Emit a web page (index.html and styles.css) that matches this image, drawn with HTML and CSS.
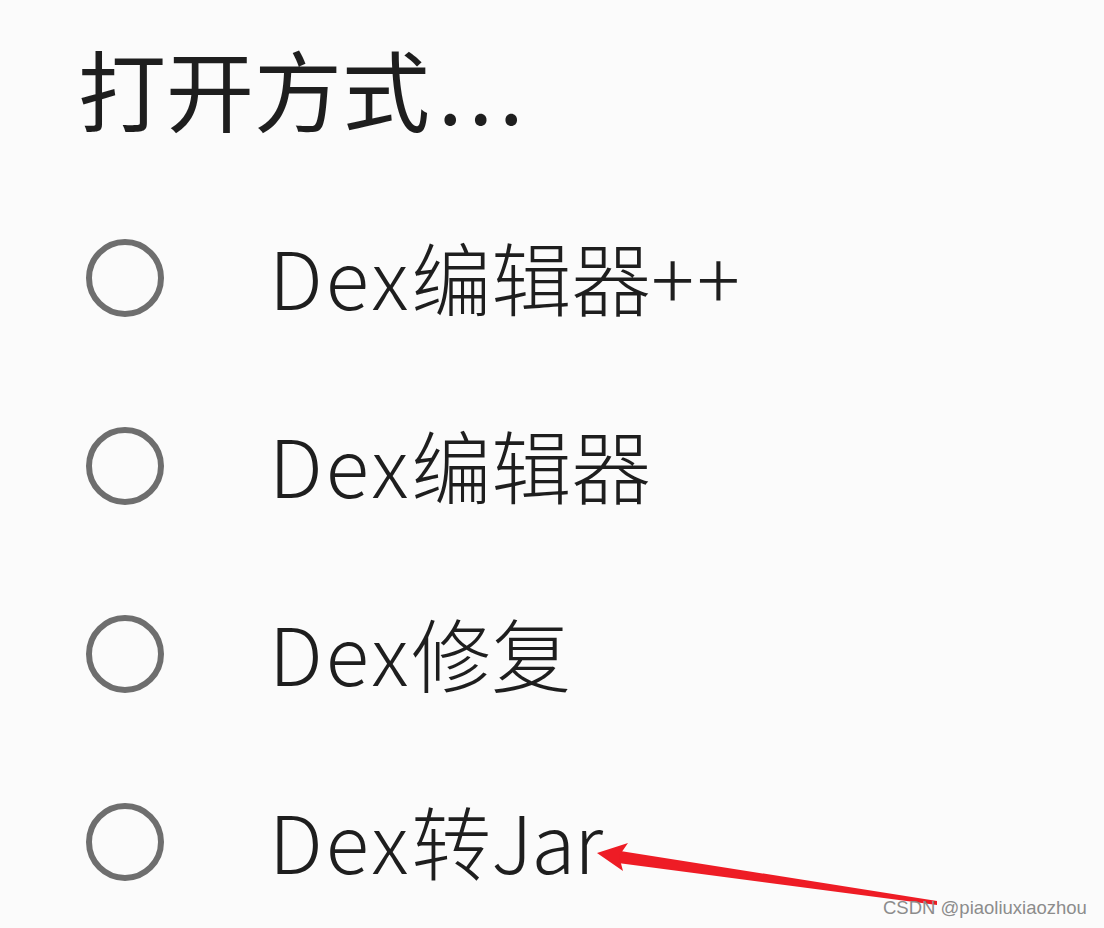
FILE: index.html
```html
<!DOCTYPE html>
<html lang="zh-CN">
<head>
<meta charset="utf-8">
<title>打开方式</title>
<link rel="stylesheet" href="styles.css">
</head>
<body>
<div class="page">
  <h1 class="title">打开方式<span class="dots">...</span></h1>
  <ul class="list">
    <li class="row"><span class="radio"></span><span class="label"><span class="lat">Dex</span>编辑器<span class="lat">++</span></span></li>
    <li class="row"><span class="radio"></span><span class="label"><span class="lat">Dex</span>编辑器</span></li>
    <li class="row"><span class="radio"></span><span class="label"><span class="lat">Dex</span>修复</span></li>
    <li class="row"><span class="radio"></span><span class="label"><span class="lat">Dex</span>转<span class="lat tight">Jar</span></span></li>
  </ul>
  <svg class="arrow" width="1104" height="928" viewBox="0 0 1104 928" aria-hidden="true">
    <polygon points="614,850 618,863 937,905 937,901" fill="#ee1c25"/>
    <polygon points="597,853 628,843 619,856 623,871" fill="#ee1c25"/>
  </svg>
  <div class="watermark">CSDN @piaoliuxiaozhou</div>
</div>
</body>
</html>
```
FILE: styles.css
```css
* { box-sizing: border-box; }
html, body {
  margin: 0;
  padding: 0;
  background: #fbfbfb;
}
body {
  font-family: "Noto Sans CJK SC", "Noto Sans", sans-serif;
  color: #1e1e1e;
}
.page {
  position: relative;
  width: 1104px;
  height: 928px;
  overflow: hidden;
}
.title {
  margin: 43px 0 0 78px;
  font-size: 88px;
  line-height: 88px;
  font-weight: 400;
  letter-spacing: 0;
}
.dots {
  margin-left: 8px;
  letter-spacing: 6px;
}
.list {
  list-style: none;
  margin: 53px 0 0 0;
  padding: 0;
}
.row {
  display: flex;
  align-items: center;
  height: 188px;
  padding-left: 86px;
}
.radio {
  flex: none;
  width: 78px;
  height: 78px;
  border: 6px solid #6e6e6e;
  border-radius: 50%;
}
.label {
  margin-left: 105px;
  font-size: 80px;
  line-height: 80px;
  font-weight: 300;
  white-space: nowrap;
  position: relative;
  top: -3px;
}
.lat {
  letter-spacing: 3px;
}
.lat.tight {
  letter-spacing: -1px;
}
.arrow {
  position: absolute;
  left: 0;
  top: 0;
  pointer-events: none;
}
.watermark {
  position: absolute;
  left: 883px;
  top: 897px;
  font-family: "Liberation Sans", Arial, sans-serif;
  font-size: 18.5px;
  line-height: 22px;
  color: #8c8c8c;
  white-space: nowrap;
}
```
